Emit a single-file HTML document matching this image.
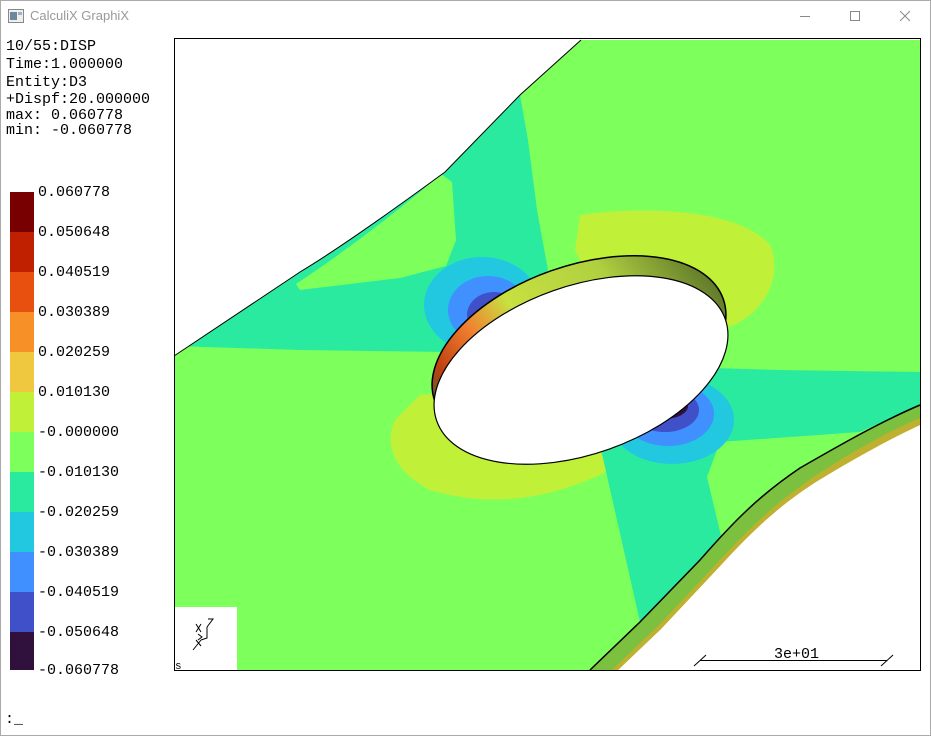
<!DOCTYPE html>
<html><head><meta charset="utf-8"><style>
html,body{margin:0;padding:0;background:#fff;}
body{width:931px;height:736px;position:relative;overflow:hidden;font-family:"Liberation Mono","DejaVu Sans Mono",monospace;}
.win{position:absolute;left:0;top:0;width:929px;height:734px;border:1px solid #aaa;}
.title{position:absolute;left:30px;top:8px;font-family:"Liberation Sans",sans-serif;font-size:13px;color:#999;}
.t{position:absolute;font-size:15px;color:#000;white-space:pre;line-height:14px;}
.lg{position:absolute;left:10px;width:24px;height:40px;}
</style></head><body>
<div class="win"></div>
<svg style="position:absolute;left:8px;top:9px" width="16" height="14"><rect x="0.5" y="0.5" width="15" height="13" fill="#eee" stroke="#888"/><rect x="2" y="3" width="7" height="8" fill="#6a8a9a"/><rect x="10" y="3" width="4" height="3" fill="#aac"/></svg>
<div class="title">CalculiX GraphiX</div>
<svg style="position:absolute;left:800px;top:8px" width="120" height="18" fill="none" stroke="#888" stroke-width="1">
<line x1="0" y1="8.5" x2="10" y2="8.5"/><rect x="50.5" y="3.5" width="9" height="9"/><line x1="100" y1="3" x2="110" y2="13"/><line x1="110" y1="3" x2="100" y2="13"/></svg>

<div class="t" style="left:6px;top:40px">10/55:DISP</div>
<div class="t" style="left:6px;top:58px">Time:1.000000</div>
<div class="t" style="left:6px;top:76px">Entity:D3</div>
<div class="t" style="left:6px;top:93px">+Dispf:20.000000</div>
<div class="t" style="left:6px;top:109px">max: 0.060778</div>
<div class="t" style="left:6px;top:124px">min: -0.060778</div>

<div class="lg" style="top:192px;background:#780000"></div>
<div class="lg" style="top:232px;background:#c02000"></div>
<div class="lg" style="top:272px;background:#e85010"></div>
<div class="lg" style="top:312px;background:#f89028"></div>
<div class="lg" style="top:352px;background:#f0c840"></div>
<div class="lg" style="top:392px;background:#c0f038"></div>
<div class="lg" style="top:432px;background:#7dff5c"></div>
<div class="lg" style="top:472px;background:#2aeaa0"></div>
<div class="lg" style="top:512px;background:#22c8e0"></div>
<div class="lg" style="top:552px;background:#4090ff"></div>
<div class="lg" style="top:592px;background:#4050c8"></div>
<div class="lg" style="top:632px;background:#30103c;height:38px"></div>
<div class="t" style="left:38px;top:186px">0.060778</div>
<div class="t" style="left:38px;top:226px">0.050648</div>
<div class="t" style="left:38px;top:266px">0.040519</div>
<div class="t" style="left:38px;top:306px">0.030389</div>
<div class="t" style="left:38px;top:346px">0.020259</div>
<div class="t" style="left:38px;top:386px">0.010130</div>
<div class="t" style="left:38px;top:426px">-0.000000</div>
<div class="t" style="left:38px;top:466px">-0.010130</div>
<div class="t" style="left:38px;top:506px">-0.020259</div>
<div class="t" style="left:38px;top:546px">-0.030389</div>
<div class="t" style="left:38px;top:586px">-0.040519</div>
<div class="t" style="left:38px;top:626px">-0.050648</div>
<div class="t" style="left:38px;top:664px">-0.060778</div>

<svg style="position:absolute;left:0;top:0" width="931" height="736">
<defs>
<clipPath id="pl"><path d="M174,356 L300,272 C340,248 400,205 445,172 L520,95 L581,40 L920,40 L920,405 C880,422 840,445 800,468 C760,495 735,520 700,560 L640,622 L590,670 L174,670 Z"/></clipPath>
<linearGradient id="wall" x1="430" y1="390" x2="730" y2="300" gradientUnits="userSpaceOnUse">
<stop offset="0" stop-color="#506030"/><stop offset="0.1" stop-color="#c04010"/><stop offset="0.25" stop-color="#f08030"/><stop offset="0.4" stop-color="#c8e040"/><stop offset="0.7" stop-color="#b0d040"/><stop offset="1" stop-color="#587028"/></linearGradient>
</defs>
<rect x="174" y="38" width="746" height="632" fill="#fff"/>
<path d="M920,405 C880,422 840,445 800,468 C760,495 735,520 700,560 L640,622 L590,670 L618,670 L660,630 L720,566 C755,528 780,505 815,482 C850,460 885,440 920,425 Z" fill="#7cc040"/>
<path d="M920,418 C885,433 850,453 815,476 C780,500 755,522 720,560 L660,624 L612,670 L618,670 L662,628 L722,564 C757,526 782,504 816,482 C852,460 886,441 920,425 Z" fill="#c0b030"/>
<g clip-path="url(#pl)">
<rect x="174" y="38" width="746" height="632" fill="#7dff5c"/>
<path d="M174,356 L300,272 C340,248 400,205 445,172 L520,95 L528,140 L537,210 L548,270 L520,300 L450,352 L300,350 L174,346 Z" fill="#2aeaa0"/>
<path d="M296,284 C340,255 400,210 441,174 L452,182 L456,240 L446,266 L400,278 L300,290 Z" fill="#7dff5c"/>
<path d="M580,215 C650,205 740,210 770,245 C785,280 760,320 720,330 L600,300 L575,250 Z" fill="#c0f038"/>
<path d="M395,420 C385,440 390,470 430,490 C480,505 540,505 610,470 L620,440 L480,390 L420,395 Z" fill="#c0f038"/>
<path d="M600,445 L640,622 L722,540 L707,477 L720,442 L860,432 L920,405 L920,372 L780,370 L712,368 L680,380 Z" fill="#2aeaa0"/>
<ellipse cx="482" cy="305" rx="58" ry="48" fill="#22c8e0"/>
<ellipse cx="488" cy="310" rx="40" ry="34" fill="#4090ff"/>
<ellipse cx="494" cy="315" rx="27" ry="23" fill="#4050c8"/>
<ellipse cx="498" cy="320" rx="16" ry="12" fill="#30103c"/>
<ellipse cx="672" cy="420" rx="62" ry="44" fill="#22c8e0"/>
<ellipse cx="668" cy="414" rx="46" ry="32" fill="#4090ff"/>
<ellipse cx="665" cy="410" rx="34" ry="22" fill="#4050c8"/>
<ellipse cx="664" cy="406" rx="24" ry="13" fill="#30103c"/>
</g>
<path d="M174,356 L300,272 C340,248 400,205 445,172 L520,95 L581,40" fill="none" stroke="#000" stroke-width="1"/>
<path d="M920,405 C880,422 840,445 800,468 C760,495 735,520 700,560 L640,622 L590,670" fill="none" stroke="#000" stroke-width="1.5"/>
<ellipse cx="579" cy="350" rx="153" ry="84" transform="rotate(-19.5 579 350)" fill="url(#wall)" stroke="#000" stroke-width="1.5"/>
<ellipse cx="581" cy="370" rx="153" ry="84" transform="rotate(-19.5 581 370)" fill="#fff" stroke="#000" stroke-width="1.2"/>
<rect x="175" y="607" width="62" height="63" fill="#fff"/>
<g stroke="#000" stroke-width="1" fill="none">
<path d="M196,624 L201,632 M201,624 L196,632"/>
<path d="M208,619 L213,619 L207,627 M207,627 L207,638 L201,640"/>
<path d="M196,640 L201,646 M201,640 L193,650"/>
<path d="M198,634 L202,637 L198,640"/>
</g>
<text x="175" y="669" font-family="Liberation Mono,monospace" font-size="11">s</text>
<rect x="174.5" y="38.5" width="746" height="632" fill="none" stroke="#000" stroke-width="1"/>
<g stroke="#000" stroke-width="1"><line x1="700" y1="660.5" x2="887" y2="660.5"/><line x1="694" y1="666" x2="706" y2="655"/><line x1="881" y1="666" x2="893" y2="655"/></g>
<text x="774" y="658" font-family="Liberation Mono,monospace" font-size="15">3e+01</text>
</svg>
<div class="t" style="left:5px;top:713px">:_</div>
</body></html>
